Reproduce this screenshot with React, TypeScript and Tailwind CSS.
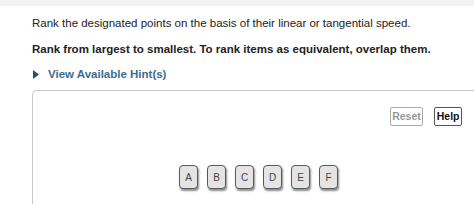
export default function App() {
  const items = ["A", "B", "C", "D", "E", "F"];
  return (
    <div className="h-[204px] w-[474px] overflow-hidden bg-white font-['Liberation_Sans',Arial,sans-serif] text-[#222]">
      <div className="h-[6px] bg-[#f3f3f3]" />
      <div className="pl-[32px]">
        <p className="mt-[10px] text-[11.5px] leading-[15px]">
          Rank the designated points on the basis of their linear or tangential speed.
        </p>
        <p className="mt-[11px] text-[11.5px] font-bold leading-[15px]">
          Rank from largest to smallest. To rank items as equivalent, overlap them.
        </p>
        <div className="mt-[10px] flex items-center gap-[9px]">
          <svg width="6" height="9" viewBox="0 0 6 9" className="ml-[1px]">
            <path d="M0 0 L6 4.5 L0 9 Z" fill="#24506b" />
          </svg>
          <span className="text-[11.5px] font-bold leading-[15px] text-[#3b6e8c]">View Available Hint(s)</span>
        </div>
        <div className="mt-[8px] h-[140px] rounded-tl-[5px] border border-r-0 border-[#c8c8c8] pt-[16px]">
          <div className="flex justify-end gap-[11px] pr-[12px]">
            <button className="h-[19px] rounded-[2px] border border-[#aaa] px-[1.5px] text-[10.5px] font-bold leading-[17px] text-[#999]">
              Reset
            </button>
            <button className="h-[19px] rounded-[2px] border border-[#555] px-[1.5px] text-[10.5px] font-bold leading-[17px] text-[#111]">
              Help
            </button>
          </div>
          <div className="mt-[39px] flex gap-[9px] pl-[146px]">
            {items.map((l) => (
              <div
                key={l}
                className="flex h-[24px] w-[19px] items-center justify-center rounded-[4px] border-[1.5px] border-[#5a5a5a] bg-[#e4e4e4] text-[10px] text-[#444] shadow-[1px_2px_2px_rgba(0,0,0,0.45)]"
              >
                {l}
              </div>
            ))}
          </div>
        </div>
      </div>
    </div>
  );
}
